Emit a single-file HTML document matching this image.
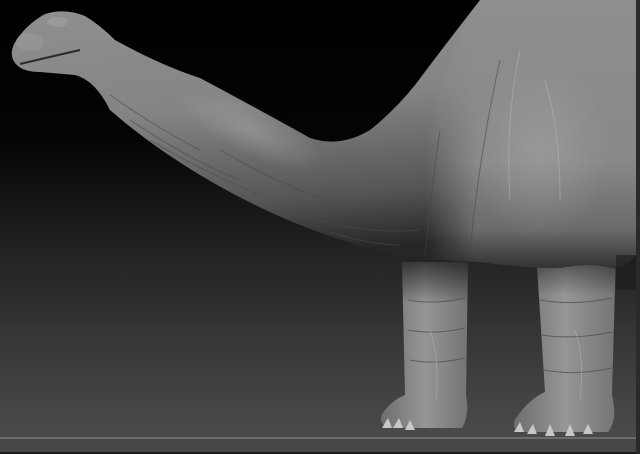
<!DOCTYPE html>
<html><head><style>
html,body{margin:0;padding:0;background:#000;}
svg{display:block}
</style></head><body>
<svg width="640" height="454" viewBox="0 0 640 454" xmlns="http://www.w3.org/2000/svg">
<defs>
<linearGradient id="bg" x1="0" y1="0" x2="0" y2="1">
<stop offset="0" stop-color="#000"/>
<stop offset="0.3" stop-color="#040404"/>
<stop offset="0.55" stop-color="#222"/>
<stop offset="0.8" stop-color="#3c3c3c"/>
<stop offset="1" stop-color="#4e4e4e"/>
</linearGradient>
<linearGradient id="neck" x1="0" y1="0" x2="0.2" y2="1">
<stop offset="0" stop-color="#909090"/>
<stop offset="0.45" stop-color="#848484"/>
<stop offset="0.8" stop-color="#555"/>
<stop offset="1" stop-color="#262626"/>
</linearGradient>
<linearGradient id="body" gradientUnits="userSpaceOnUse" x1="0" y1="0" x2="0" y2="270">
<stop offset="0" stop-color="#8e8e8e"/>
<stop offset="0.6" stop-color="#888"/>
<stop offset="0.85" stop-color="#6a6a6a"/>
<stop offset="1" stop-color="#303030"/>
</linearGradient>
<linearGradient id="fade" gradientUnits="userSpaceOnUse" x1="425" y1="0" x2="475" y2="0">
<stop offset="0" stop-color="#fff" stop-opacity="0"/>
<stop offset="1" stop-color="#fff" stop-opacity="1"/>
</linearGradient>
<mask id="m"><rect x="0" y="0" width="640" height="454" fill="url(#fade)"/></mask>
<linearGradient id="leg" x1="0" y1="0" x2="1" y2="0">
<stop offset="0" stop-color="#6e6e6e"/>
<stop offset="0.5" stop-color="#969696"/>
<stop offset="1" stop-color="#747474"/>
</linearGradient>
<linearGradient id="legtop" x1="0" y1="0" x2="0" y2="1">
<stop offset="0" stop-color="#000" stop-opacity="0.6"/>
<stop offset="0.25" stop-color="#000" stop-opacity="0"/>
</linearGradient>
<radialGradient id="shine" cx="0.5" cy="0.5" r="0.5">
<stop offset="0" stop-color="#a8a8a8" stop-opacity="0.5"/>
<stop offset="1" stop-color="#a8a8a8" stop-opacity="0"/>
</radialGradient>
</defs>
<rect width="640" height="454" fill="url(#bg)"/>
<rect x="0" y="437" width="640" height="2" fill="#6c6c6c"/>
<rect x="0" y="439" width="640" height="13" fill="#474747"/>
<rect x="0" y="452" width="640" height="2" fill="#1c1c1c"/>

<path d="M402 262 L468 262 L466 395 Q470 415 462 428 L390 428 Q378 425 382 414 Q392 400 405 395 Z" fill="url(#leg)"/>
<path d="M402 262 L468 262 L466 395 Q470 415 462 428 L390 428 Q378 425 382 414 Q392 400 405 395 Z" fill="url(#legtop)"/>
<path d="M536 250 L616 250 L612 395 Q618 420 608 432 L520 432 Q510 428 516 418 Q528 400 545 392 Z" fill="url(#leg)"/>
<path d="M536 250 L616 250 L612 395 Q618 420 608 432 L520 432 Q510 428 516 418 Q528 400 545 392 Z" fill="url(#legtop)"/>
<g fill="#c8c8c8">
<path d="M382 428 l6 -10 l4 10z"/><path d="M393 428 l6 -10 l4 10z"/><path d="M405 430 l5 -10 l5 10z"/>
<path d="M514 432 l6 -10 l4 10z"/><path d="M527 434 l6 -10 l4 10z"/><path d="M545 436 l5 -12 l5 12z"/><path d="M565 436 l5 -12 l5 12z"/><path d="M583 434 l5 -10 l5 10z"/>
</g>
<g stroke="#4a4a4a" stroke-width="1" fill="none" opacity="0.7">
<path d="M408 300 Q435 305 465 298"/><path d="M408 330 Q435 335 465 328"/><path d="M410 360 Q435 365 465 358"/>
<path d="M540 300 Q575 306 612 298"/><path d="M542 335 Q575 340 612 332"/><path d="M544 370 Q575 376 612 368"/>
</g>

<path d="M480 0 L636 0 L636 255 Q625 270 612 268 Q590 262 560 268 Q520 268 480 262 Q440 260 400 256 Q350 245 300 225 Q250 205 200 175 Q150 145 110 110 Q95 80 75 75 L40 72 Q25 72 18 66 Q8 58 14 44 Q25 25 45 14 Q65 8 85 16 Q100 25 115 40 Q160 65 200 78 Q260 110 310 138 Q340 148 370 130 Q395 110 415 85 Q445 45 480 0 Z" fill="url(#neck)"/>
<path d="M480 0 L636 0 L636 255 Q625 270 612 268 Q590 262 560 268 Q520 268 480 262 Q450 261 420 258 Q420 200 425 150 Q435 100 450 55 Q465 25 480 0 Z" fill="url(#body)" mask="url(#m)"/>
<ellipse cx="540" cy="150" rx="70" ry="90" fill="url(#shine)"/>
<ellipse cx="250" cy="130" rx="80" ry="25" fill="url(#shine)" transform="rotate(25 250 130)"/>
<path d="M20 64 Q45 58 80 50" stroke="#2a2a2a" stroke-width="2" fill="none"/>
<ellipse cx="58" cy="22" rx="10" ry="5" fill="#9a9a9a"/>
<ellipse cx="30" cy="42" rx="14" ry="9" fill="#979797" opacity="0.7"/>
<g stroke="#4a4a4a" stroke-width="1" fill="none" opacity="0.6">
<path d="M110 95 Q160 130 200 150"/><path d="M130 120 Q190 160 240 180"/>
<path d="M220 150 Q280 185 340 205"/><path d="M300 215 Q360 235 420 230"/>
<path d="M440 130 Q430 200 425 255"/><path d="M500 60 Q480 150 470 250"/>
<path d="M330 232 Q370 245 400 245"/><path d="M150 140 Q200 170 260 195"/>
</g>
<g stroke="#b8b8b8" stroke-width="1" fill="none" opacity="0.5">
<path d="M430 330 Q440 360 436 400"/><path d="M575 330 Q585 360 580 400"/>
<path d="M545 80 Q560 130 560 200"/><path d="M520 50 Q505 120 510 200"/>
</g>
<rect x="636" y="0" width="4" height="454" fill="#2a2a2a"/>
<rect x="616" y="255" width="20" height="35" fill="#1c1c1c" opacity="0.6"/>
</svg>
</body></html>
